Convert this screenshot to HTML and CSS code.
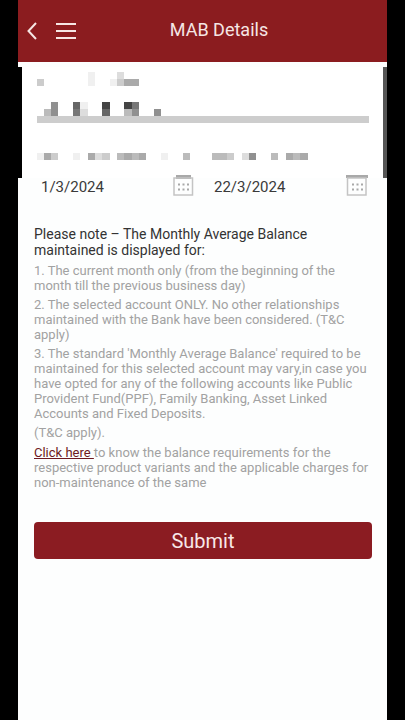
FILE: index.html
```html
<!DOCTYPE html>
<html>
<head>
  <title>MAB Details</title>
  <link rel="stylesheet" href="styles.css">
</head>
<body>
  <div class="screen">
    <div class="header">
      <svg class="back" width="12" height="20" viewBox="0 0 12 20"><path d="M10 2 L2.5 10 L10 18" fill="none" stroke="#f6e6e4" stroke-width="2"/></svg>
      <svg class="menu" width="22" height="18" viewBox="0 0 22 18"><path d="M1 2 H21 M1 9 H21 M1 16 H21" fill="none" stroke="#f6e6e4" stroke-width="2"/></svg>
      <h1>MAB Details</h1>
    </div>

    <div class="account">
      <div class="mosaic row-one">
        <i></i><i></i><i></i><i></i><i></i><i></i><i></i><i class="s1"></i><i></i><i></i><i></i><i class="s2"></i>
      </div>
      <div class="mosaic">
        <i class="s3"></i><i></i><i></i><i></i><i></i><i></i><i></i><i class="s1"></i><i></i><i></i><i class="s1"></i><i class="s3"></i><i class="s5"></i><i class="s5"></i>
      </div>
      <div class="mosaic row-two">
        <i></i><i></i><i class="s6"></i><i></i><i></i><i class="s8"></i><i class="s1"></i><i></i><i></i><i class="s9"></i><i></i><i></i><i class="s9"></i><i class="s7"></i>
      </div>
      <div class="mosaic">
        <i></i><i class="s4"></i><i class="s6"></i><i></i><i></i><i class="s7"></i><i class="s2"></i><i></i><i></i><i class="s8"></i><i></i><i></i><i class="s4"></i><i class="s6"></i><i></i><i></i><i class="s6"></i>
      </div>
      <div class="rule"></div>
      <div class="mosaic row-three">
        <i class="s1"></i><i class="s5"></i><i class="s3"></i><i></i><i></i><i class="s1"></i><i></i><i class="s5"></i><i class="s2"></i><i class="s3"></i><i></i><i class="s4"></i><i class="s5"></i><i class="s4"></i><i class="s5"></i><i></i><i></i><i class="s1"></i><i></i><i></i><i class="s4"></i><i></i><i></i><i></i><i class="s4"></i><i class="s4"></i><i class="s3"></i><i></i><i class="s2"></i><i class="s6"></i><i></i><i></i><i class="s4"></i><i></i><i class="s5"></i><i class="s4"></i><i class="s5"></i>
      </div>
    </div>

    <div class="dates">
      <div class="date from">
        <span>1/3/2024</span>
        <svg width="21" height="21" viewBox="0 0 21 21">
          <rect x="3" y="0" width="15" height="4" fill="#a9a9a9"/>
          <rect x="1" y="3" width="18.5" height="17" fill="none" stroke="#c4c4c4" stroke-width="1.5"/>
          <path d="M5 9.5 h2 M9.5 9.5 h2 M14 9.5 h2 M5 14.5 h2 M9.5 14.5 h2 M14 14.5 h2" stroke="#a8a8a8" stroke-width="2"/>
        </svg>
      </div>
      <div class="date to">
        <span>22/3/2024</span>
        <svg width="22" height="21" viewBox="0 0 22 21">
          <rect x="0" y="0" width="22" height="3" fill="#a9a9a9"/>
          <rect x="1.5" y="3" width="18.5" height="17" fill="none" stroke="#c4c4c4" stroke-width="1.5"/>
          <path d="M6 9.5 h2 M10.5 9.5 h2 M15 9.5 h2 M6 14.5 h2 M10.5 14.5 h2 M15 14.5 h2" stroke="#a8a8a8" stroke-width="2"/>
        </svg>
      </div>
    </div>

    <div class="note">
      <p class="lead">Please note – The Monthly Average Balance maintained is displayed for:</p>
      <p>1. The current month only (from the beginning of the month till the previous business day)</p>
      <p>2. The selected account ONLY. No other relationships maintained with the Bank have been considered. (T&amp;C apply)</p>
      <p>3. The standard 'Monthly Average Balance' required to be maintained for this selected account may vary,in case you have opted for any of the following accounts like Public Provident Fund(PPF), Family Banking, Asset Linked Accounts and Fixed Deposits.</p>
      <p class="apply">(T&amp;C apply).</p>
      <p><a href="#">Click here </a>to know the balance requirements for the respective product variants and the applicable charges for non-maintenance of the same</p>
    </div>

    <button class="submit">Submit</button>
  </div>
</body>
</html>
```

FILE: styles.css
```css
html, body {
  height: 100%;
}

body {
  margin: 0;
  background-color: #000;
  font-family: Roboto, "Liberation Sans", sans-serif;
  overflow: hidden;
}

.screen {
  width: 369px;
  height: 720px;
  margin-left: 18px;
  background-color: #fdfefe;
}

.header {
  display: flex;
  align-items: center;
  height: 62px;
  padding-left: 8px;
  background-color: #8b1c1f;
  box-sizing: border-box;
}

.header h1 {
  flex: 1;
  margin: 0 0 4px 0;
  padding-left: 8px;
  font-size: 18px;
  font-weight: 400;
  text-align: center;
  color: #f6e6e4;
}

.back {
  margin-right: 17px;
}

.menu {
  margin-right: -34px;
}

.account {
  height: 111px;
  margin-top: 5px;
  padding: 5px 0 0 14.5px;
  box-sizing: border-box;
  border-left: 4px solid #000;
  border-right: 4px solid #555;
  background-color: #fff;
}

.mosaic {
  display: flex;
  height: 7px;
}

.mosaic i {
  flex: 0 0 7.33px;
}

.row-two {
  margin-top: 16px;
}

.row-three {
  margin-top: 30px;
}

.rule {
  width: 332px;
  height: 7px;
  background-color: #cdcdcd;
}

.s1 { background-color: #f0f0f0; }
.s2 { background-color: #dddddd; }
.s3 { background-color: #cccccc; }
.s4 { background-color: #bbbbbb; }
.s5 { background-color: #aaaaaa; }
.s6 { background-color: #909090; }
.s7 { background-color: #777777; }
.s8 { background-color: #666666; }
.s9 { background-color: #444444; }

.dates {
  display: flex;
  height: 20px;
  margin-top: -3px;
  padding: 0 19px 0 23px;
}

.date {
  display: flex;
  align-items: center;
  justify-content: space-between;
  font-size: 15px;
  color: #3a3a3a;
}

.date span {
  padding-top: 4px;
}

.from {
  width: 153px;
  margin-right: 20px;
}

.to {
  flex: 1;
}

.note {
  margin-top: 31px;
  padding: 0 15px 0 16px;
  font-size: 13px;
  line-height: 15px;
  color: #a2a2a2;
}

.note p {
  margin: 0 0 4px 0;
}

.note .lead {
  margin-bottom: 5px;
  font-size: 14px;
  line-height: 16px;
  color: #333;
}

.note .apply {
  margin-bottom: 5px;
}

.note a {
  color: #6e1a22;
}

.submit {
  display: block;
  width: 338px;
  height: 37px;
  margin: 32px 0 0 16px;
  border: none;
  border-radius: 4px;
  background-color: #8b1c22;
  color: #f8e8e8;
  font-family: inherit;
  font-size: 20px;
}
```
